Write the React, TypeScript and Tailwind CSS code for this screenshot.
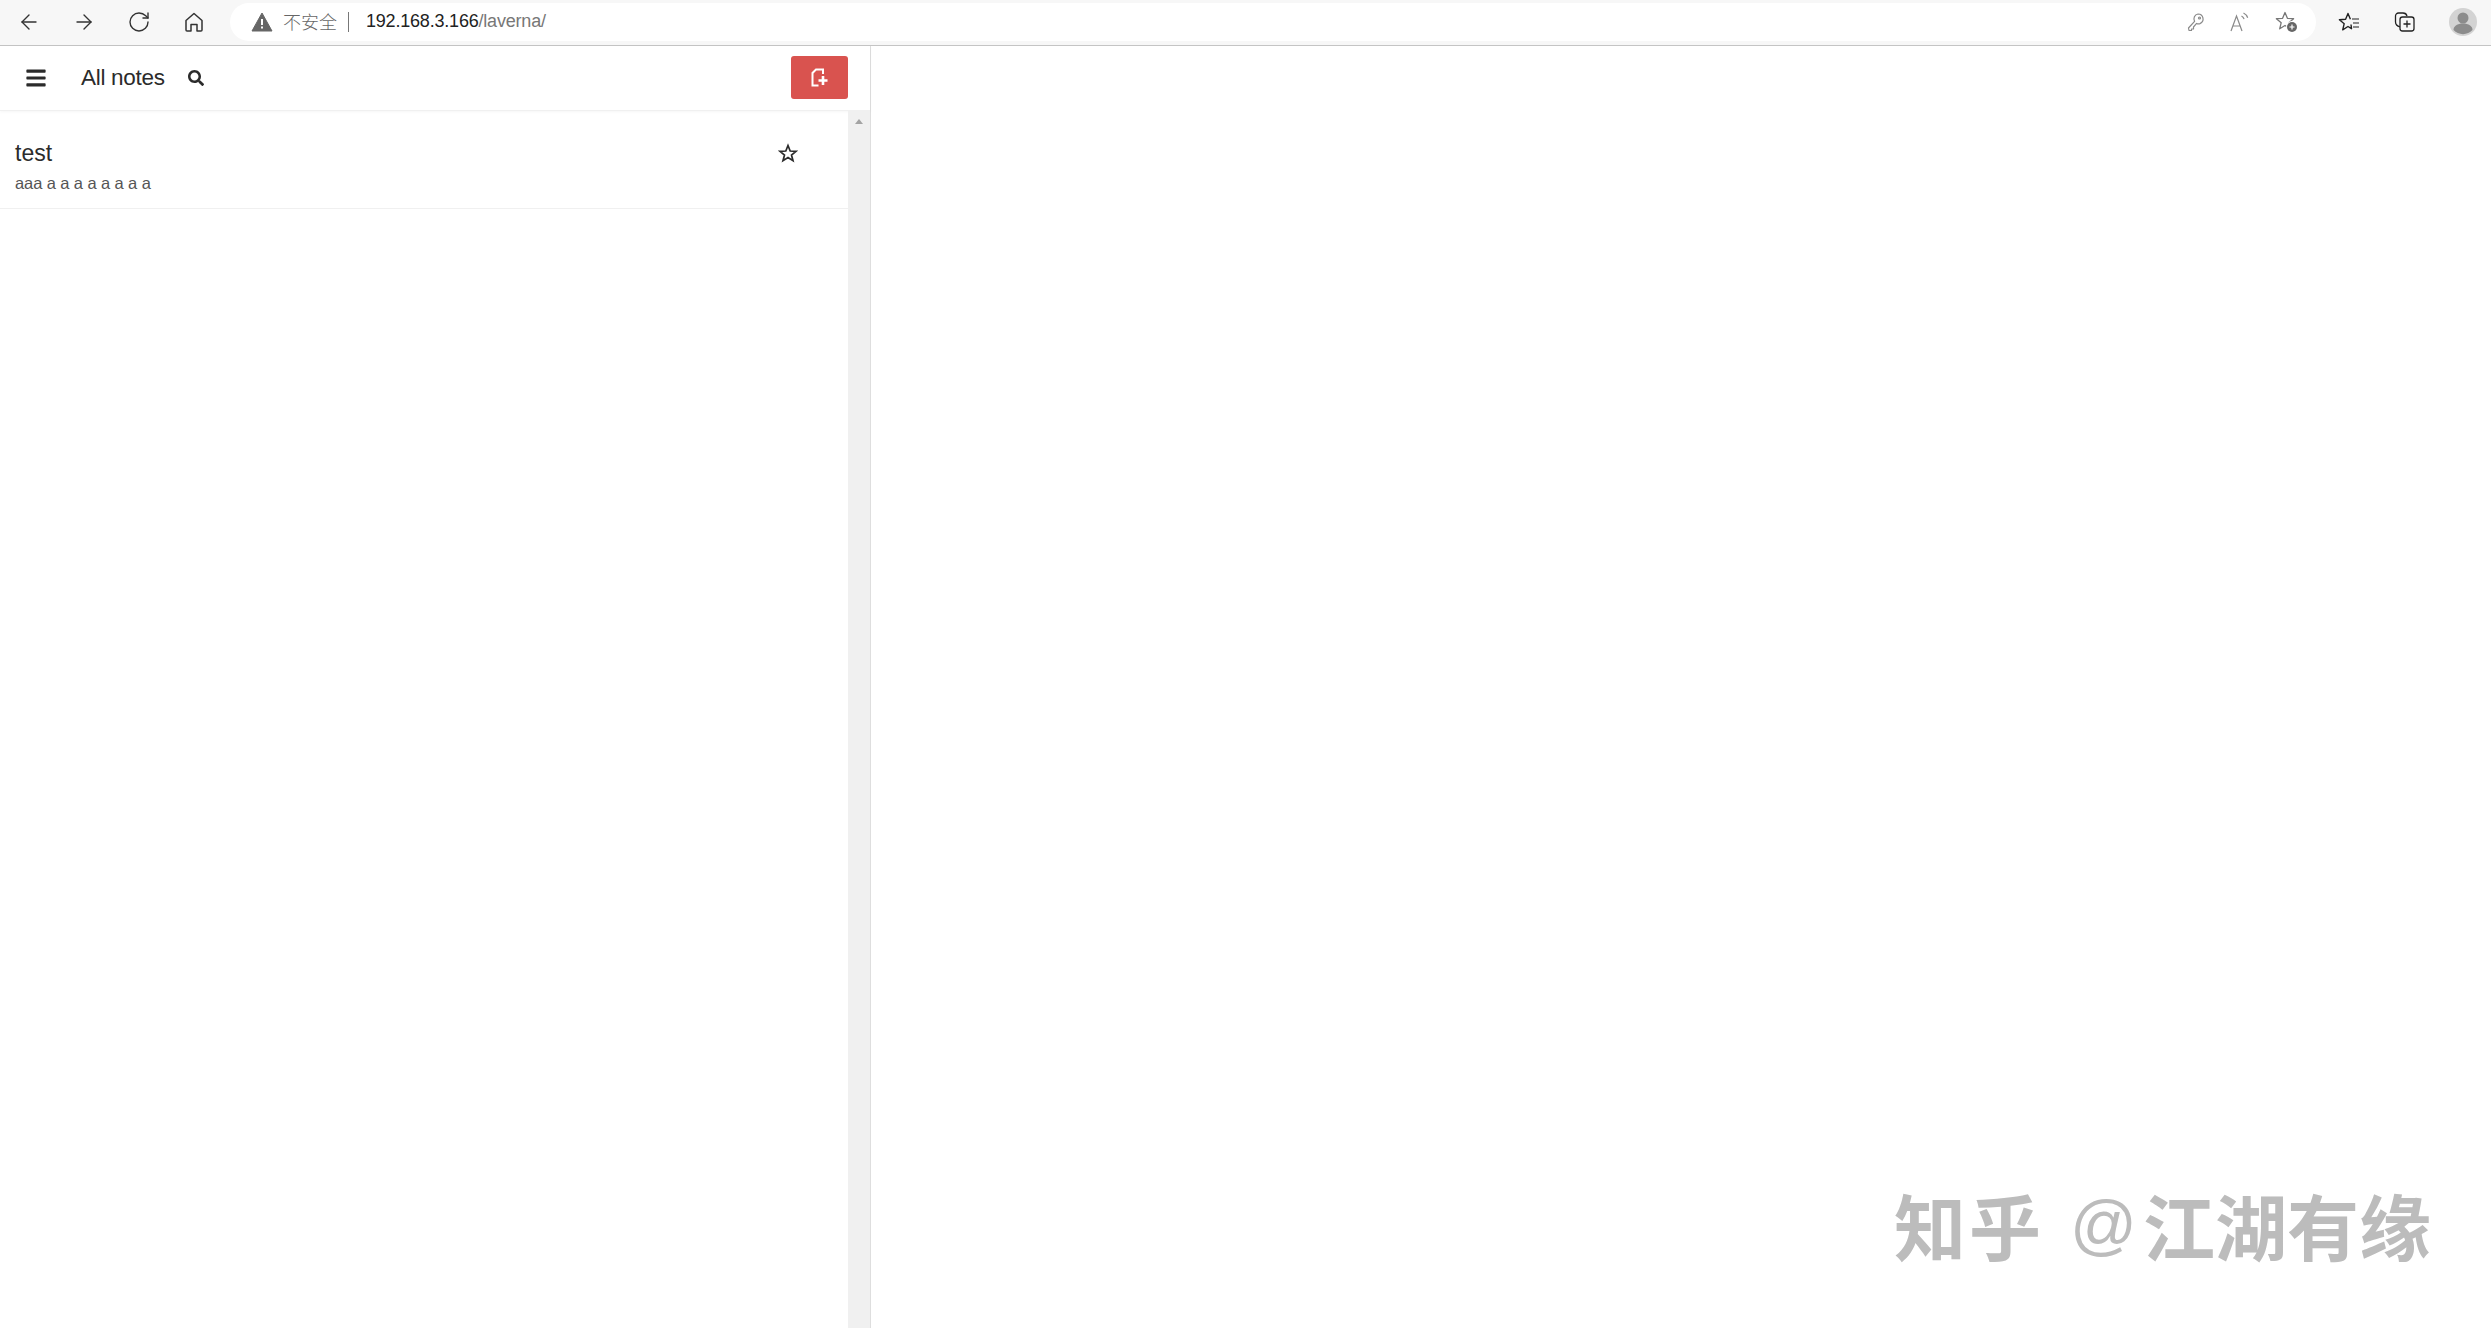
import { ArrowLeft, ArrowRight, RotateCw } from "lucide-react";
import { FaBars, FaSearch } from "react-icons/fa";

function HomeIcon() {
  return (
    <svg width="22" height="22" viewBox="0 0 22 22" fill="none" stroke="#333" strokeWidth="1.5">
      <path d="M3 9.5 11 2.5l8 7V19a1 1 0 0 1-1 1h-4v-6.5H8V20H4a1 1 0 0 1-1-1z" strokeLinejoin="round" />
    </svg>
  );
}

function WarningIcon() {
  return (
    <svg width="22" height="20" viewBox="0 0 22 20">
      <path d="M11 1 21 19H1z" fill="#666" stroke="#666" strokeLinejoin="round" />
      <rect x="10" y="7" width="2" height="6" fill="#fff" />
      <rect x="10" y="14.5" width="2" height="2" fill="#fff" />
    </svg>
  );
}

function KeyIcon() {
  return (
    <svg width="18" height="20" viewBox="0 0 18 20" fill="none" stroke="#8a8a8a" strokeWidth="1.2">
      <path d="M11 2a5 5 0 0 1 2 9.6c-1 .4-2.5.3-3.4-.2L6.5 15v2H4.500v1.500H2L1.500 16l6.100-6.600A5 5 0 0 1 11 2z" strokeLinejoin="round" />
      <circle cx="12.500" cy="6" r="1" />
    </svg>
  );
}

function ReadAloudIcon() {
  return (
    <svg width="20" height="20" viewBox="0 0 20 20" fill="none" stroke="#8a8a8a" strokeWidth="1.2">
      <path d="M1 19 6.500 4l5.500 15M3 14h7" />
      <path d="M11.500 4c1.300.7 2.200 1.800 2.600 3.200M13.500 1c2 1 3.500 2.700 4.200 4.800" />
    </svg>
  );
}

function StarPlusIcon() {
  return (
    <svg width="24" height="22" viewBox="0 0 24 22" fill="none">
      <path d="M10 1.500 12.400 7.300 18.600 7.700 13.800 11.700 15.300 17.800 10 14.500 4.700 17.800 6.200 11.700 1.400 7.700 7.600 7.300z" stroke="#777" strokeWidth="1.300" strokeLinejoin="round" />
      <circle cx="17" cy="16" r="6" fill="#fff" />
      <circle cx="17" cy="16" r="5" fill="#666" />
      <path d="M17 13.500v5M14.500 16h5" stroke="#fff" strokeWidth="1.200" />
    </svg>
  );
}

function FavoritesIcon() {
  return (
    <svg width="22" height="20" viewBox="0 0 22 20" fill="none" stroke="#222" strokeWidth="1.400">
      <path d="M12.400 7.300 10 1.500 7.600 7.300 1.400 7.700 6.200 11.700 4.700 17.800 10 14.500 13.500 16.700 13 12.500" strokeLinejoin="round" />
      <path d="M14 7h7M15 11h6M15 15h6" strokeWidth="1.200" />
    </svg>
  );
}

function CollectionsIcon() {
  return (
    <svg width="21" height="21" viewBox="0 0 21 21" fill="none" stroke="#222" strokeWidth="1.300">
      <path d="M6 16C3 15 1.500 13.500 1.500 11V5a3 3 0 0 1 3-3H9c2 0 3.500 1 4 3" />
      <rect x="6" y="6" width="14" height="14" rx="2.500" />
      <path d="M13 9.500v7M9.500 13h7" />
    </svg>
  );
}

function AvatarIcon() {
  return (
    <svg width="28" height="28" viewBox="0 0 28 28">
      <circle cx="14" cy="14" r="14" fill="#d3d3d3" />
      <circle cx="14" cy="10" r="5.500" fill="#8c8c8c" />
      <path d="M4.500 22c0-4 4-6.500 9.500-6.500S23.500 18 23.500 22a13 13 0 0 1-19 0z" fill="#8c8c8c" />
    </svg>
  );
}

function NewNoteIcon() {
  return (
    <svg width="18" height="19" viewBox="0 0 18 19" fill="none">
      <path d="M12 6V1.500H5L1.500 5v12.500h6" stroke="#fff" strokeWidth="2" />
      <path d="M12 8v9M7.500 12.500h9" stroke="#fff" strokeWidth="2.600" />
    </svg>
  );
}

function StarOutline() {
  return (
    <svg width="20" height="20" viewBox="0 0 20 20" fill="none" stroke="#2b2b2b" strokeWidth="1.700">
      <path d="M10 2.500 12.200 8 18 8.300 13.500 12l1.500 5.700-5-3.200-5 3.200L6.500 12 2 8.300 7.800 8z" strokeLinejoin="miter" />
    </svg>
  );
}

export default function App() {
  return (
    <div className="flex h-screen flex-col overflow-hidden bg-white font-['Liberation_Sans',sans-serif]">
      <div className="flex h-[46px] shrink-0 items-center border-b border-[#c4c4c4] bg-[#f7f7f7] pb-[2px] pl-[17px] pr-[14px]">
        <div className="flex items-center gap-[31px]">
          <ArrowLeft size={24} strokeWidth={1.400} color="#333" />
          <ArrowRight size={24} strokeWidth={1.400} color="#333" />
          <RotateCw size={24} strokeWidth={1.400} color="#333" />
          <div className="ml-[1px]">
            <HomeIcon />
          </div>
        </div>
        <div className="ml-[25px] flex h-[38px] flex-1 items-center rounded-full bg-white pl-[21px] pr-[17px]">
          <WarningIcon />
          <span className="ml-[10px] font-['Noto_Sans_CJK_SC',sans-serif] text-[18px] font-light text-[#666]">不安全</span>
          <span className="ml-[11px] h-[20px] w-[1px] bg-[#777]" />
          <span className="ml-[17px] text-[18px] tracking-[-0.2px] text-[#222]">
            192.168.3.166<span className="text-[#777]">/laverna/</span>
          </span>
          <div className="ml-auto flex items-center gap-[25px]">
            <KeyIcon />
            <ReadAloudIcon />
            <StarPlusIcon />
          </div>
        </div>
        <div className="ml-[22px] flex items-center gap-[34px]">
          <FavoritesIcon />
          <CollectionsIcon />
          <AvatarIcon />
        </div>
      </div>
      <div className="relative flex min-h-0 flex-1">
        <div className="flex w-[871px] shrink-0 flex-col border-r border-[#dedede]">
          <div className="flex h-[65px] shrink-0 items-center justify-between border-b border-[#f0f0f0] pb-[1px] pr-[22px] shadow-[0_1px_3px_rgba(0,0,0,0.04)]">
            <div className="flex items-center pl-[25px]">
              <FaBars size={22} color="#2b2b2b" />
              <span className="ml-[34px] text-[22.5px] tracking-[-0.3px] text-[#2b2b2b]">All notes</span>
              <FaSearch size={16} color="#2b2b2b" className="ml-[23px]" />
            </div>
            <button className="flex h-[43px] w-[57px] items-center justify-center rounded-[3px] bg-[#d9534f]">
              <NewNoteIcon />
            </button>
          </div>
          <div className="flex min-h-0 flex-1">
            <div className="flex-1">
              <div className="flex h-[98px] items-start justify-between border-b border-[#f0f0f0] pl-[15px] pr-[50px] pt-[29px]">
                <div>
                  <div className="text-[23px] leading-[26px] text-[#2b2b2b]">test</div>
                  <div className="mt-[7px] text-[16.5px] leading-[20px] tracking-[-0.1px] text-[#555]">aaa a a a a a a a a</div>
                </div>
                <div className="pt-[3px]">
                  <StarOutline />
                </div>
              </div>
            </div>
            <div className="w-[22px] shrink-0 bg-[#f0f0f0] pt-[8px]">
              <div className="mx-auto h-0 w-0 border-x-[4px] border-b-[5px] border-x-transparent border-b-[#a3a3a3]" />
            </div>
          </div>
        </div>
        <div className="flex-1" />
        <div className="absolute bottom-[59px] right-[60px] flex items-center whitespace-nowrap font-['Noto_Sans_CJK_SC',sans-serif] text-[72px] font-bold leading-[90px] text-[#bcbcbc]">
          <span className="tracking-[3px]">知乎</span>
          <span className="ml-[26px] font-['Liberation_Sans',sans-serif] text-[66px] font-normal">@</span>
          <span className="ml-[6px]">江湖有缘</span>
        </div>
      </div>
    </div>
  );
}
